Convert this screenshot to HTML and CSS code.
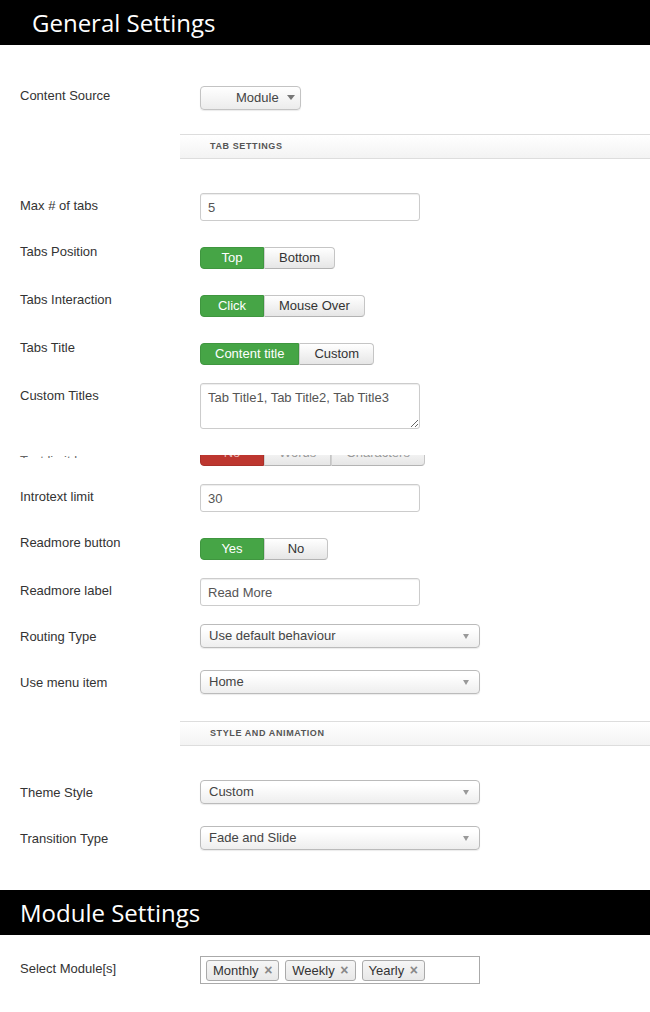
FILE: index.html
```html
<!DOCTYPE html>
<html lang="en">
<head>
    <meta charset="UTF-8">
    <meta name="viewport" content="width=device-width, initial-scale=1.0">
    <title>Tabs Module Settings</title>
    <link rel="stylesheet" href="styles.css">
</head>
<body>
    <h1 class="page-title">General Settings</h1>

    <div class="row first">
        <label>Content Source</label>
        <div class="dropdown">Module <span class="caret"></span></div>
    </div>

    <div class="section-bar">Tab Settings</div>

    <div class="row">
        <label>Max # of tabs</label>
        <input type="text" class="input" value="5">
    </div>
    <div class="row">
        <label>Tabs Position</label>
        <div class="btn-group">
            <span class="btn on">Top</span>
            <span class="btn">Bottom</span>
        </div>
    </div>
    <div class="row">
        <label>Tabs Interaction</label>
        <div class="btn-group">
            <span class="btn on">Click</span>
            <span class="btn">Mouse Over</span>
        </div>
    </div>
    <div class="row">
        <label>Tabs Title</label>
        <div class="btn-group">
            <span class="btn on">Content title</span>
            <span class="btn">Custom</span>
        </div>
    </div>
    <div class="row">
        <label>Custom Titles</label>
        <textarea class="textarea">Tab Title1, Tab Title2, Tab Title3</textarea>
    </div>
    <div class="row cut">
        <div class="cut-label">Text limit by</div>
        <div class="cut-ctrl">
            <div class="btn-group">
                <span class="btn off">No</span>
                <span class="btn">Words</span>
                <span class="btn">Characters</span>
            </div>
        </div>
    </div>
    <div class="row">
        <label>Introtext limit</label>
        <input type="text" class="input" value="30">
    </div>
    <div class="row">
        <label>Readmore button</label>
        <div class="btn-group">
            <span class="btn on">Yes</span>
            <span class="btn">No</span>
        </div>
    </div>
    <div class="row">
        <label>Readmore label</label>
        <input type="text" class="input" value="Read More">
    </div>
    <div class="row">
        <label>Routing Type</label>
        <div class="select">Use default behaviour <span class="arrow"></span></div>
    </div>
    <div class="row">
        <label>Use menu item</label>
        <div class="select">Home <span class="arrow"></span></div>
    </div>

    <div class="section-bar">Style and Animation</div>

    <div class="row">
        <label>Theme Style</label>
        <div class="select">Custom <span class="arrow"></span></div>
    </div>
    <div class="row">
        <label>Transition Type</label>
        <div class="select">Fade and Slide <span class="arrow"></span></div>
    </div>

    <h1 class="page-title module">Module Settings</h1>

    <div class="row modules">
        <label>Select Module[s]</label>
        <div class="tags">
            <span class="tag">Monthly <b>&times;</b></span>
            <span class="tag">Weekly <b>&times;</b></span>
            <span class="tag">Yearly <b>&times;</b></span>
        </div>
    </div>
</body>
</html>
```

FILE: styles.css
```css
body {
    margin: 0;
    font-family: Arial, "Liberation Sans", sans-serif;
    font-size: 13px;
    color: #333;
    background: #fff;
}
.page-title {
    margin: 0;
    height: 45px;
    line-height: 45px;
    padding-left: 32px;
    background: #000;
    color: #fff;
    font-family: "Open Sans", sans-serif;
    font-size: 24px;
    font-weight: 400;
}
.page-title.module {
    padding-left: 20px;
    margin-top: 36px;
}
.row {
    display: flex;
    align-items: flex-start;
    min-height: 28px;
    margin-bottom: 18px;
}
.row.first {
    margin-top: 38px;
    margin-bottom: 23px;
}
.row.modules {
    margin-top: 21px;
}
.row label {
    flex: 0 0 200px;
    box-sizing: border-box;
    padding: 4px 0 0 20px;
    line-height: 18px;
}
.input {
    width: 220px;
    height: 28px;
    box-sizing: border-box;
    margin: 0;
    padding: 4px 7px;
    border: 1px solid #ccc;
    border-radius: 3px;
    box-shadow: inset 0 1px 1px rgba(0, 0, 0, .075);
    font-family: Arial, "Liberation Sans", sans-serif;
    font-size: 13px;
    color: #555;
}
.textarea {
    width: 220px;
    height: 46px;
    box-sizing: border-box;
    margin: 0;
    padding: 5px 7px;
    border: 1px solid #ccc;
    border-radius: 3px;
    box-shadow: inset 0 1px 1px rgba(0, 0, 0, .075);
    font-family: Arial, "Liberation Sans", sans-serif;
    font-size: 13px;
    line-height: 18px;
    color: #555;
    resize: vertical;
}
.dropdown {
    margin-top: 3px;
    width: 101px;
    height: 24px;
    box-sizing: border-box;
    padding-left: 35px;
    line-height: 22px;
    border: 1px solid #c3c3c3;
    border-radius: 4px;
    background: linear-gradient(#fff, #ececec);
    box-shadow: 0 1px 1px rgba(0, 0, 0, .08);
    color: #444;
}
.caret {
    display: inline-block;
    margin-left: 5px;
    vertical-align: 2px;
    border-top: 5px solid #777;
    border-left: 4px solid transparent;
    border-right: 4px solid transparent;
}
.btn-group {
    display: flex;
    margin-top: 8px;
}
.btn {
    min-width: 64px;
    height: 22px;
    box-sizing: border-box;
    padding: 0 14px;
    text-align: center;
    line-height: 20px;
    border: 1px solid #c5c5c5;
    border-bottom-color: #b3b3b3;
    background: linear-gradient(#fff, #e6e6e6);
    color: #333;
}
.btn + .btn {
    border-left: 1px solid #d0d0d0;
}
.btn:first-child {
    border-radius: 4px 0 0 4px;
}
.btn:last-child {
    border-radius: 0 4px 4px 0;
}
.btn.on {
    background: #46a546;
    border-color: #3f963f;
    color: #fff;
}
.btn.off {
    background: #bd362f;
    border-color: #a9302a;
    color: #fff;
}
/* strip where two screenshots were stitched together */
.row.cut {
    min-height: 0;
    height: 13px;
    margin-top: 24px;
}
.cut-label {
    flex: 0 0 200px;
    box-sizing: border-box;
    padding-left: 20px;
    margin-top: 1px;
    height: 4px;
    overflow: hidden;
    line-height: 13px;
    color: #666;
}
.cut-ctrl {
    margin-top: 2px;
    height: 11px;
    overflow: hidden;
}
.cut-ctrl .btn-group {
    margin-top: -13px;
}
.cut-ctrl .btn {
    height: 24px;
    color: #999;
}
.cut-ctrl .btn.off {
    color: #e8b8b5;
}
.select {
    position: relative;
    width: 280px;
    height: 24px;
    box-sizing: border-box;
    padding-left: 8px;
    line-height: 22px;
    border: 1px solid #bbb;
    border-radius: 4px;
    background: linear-gradient(#fff 20%, #eee);
    box-shadow: 0 1px 1px rgba(0, 0, 0, .08);
    color: #444;
}
.arrow {
    position: absolute;
    right: 10px;
    top: 9px;
    border-top: 5px solid #999;
    border-left: 3px solid transparent;
    border-right: 3px solid transparent;
}
.section-bar {
    margin: 0 0 34px 180px;
    height: 25px;
    box-sizing: border-box;
    padding-left: 30px;
    line-height: 23px;
    border-top: 1px solid #ddd;
    border-bottom: 1px solid #ddd;
    background: linear-gradient(#fff, #f3f3f3);
    font-size: 9px;
    font-weight: bold;
    letter-spacing: .6px;
    text-transform: uppercase;
    color: #555;
}
.row + .section-bar {
    margin-top: 23px;
}
.tags {
    display: flex;
    gap: 6px;
    width: 280px;
    height: 28px;
    box-sizing: border-box;
    padding: 3px 5px;
    border: 1px solid #aaa;
}
.tag {
    height: 21px;
    box-sizing: border-box;
    padding: 0 6px;
    line-height: 19px;
    border: 1px solid #aaa;
    border-radius: 3px;
    background: linear-gradient(#f6f6f6, #e8e8e8);
    color: #333;
}
.tag b {
    margin-left: 2px;
    color: #888;
    font-size: 14px;
}
```
